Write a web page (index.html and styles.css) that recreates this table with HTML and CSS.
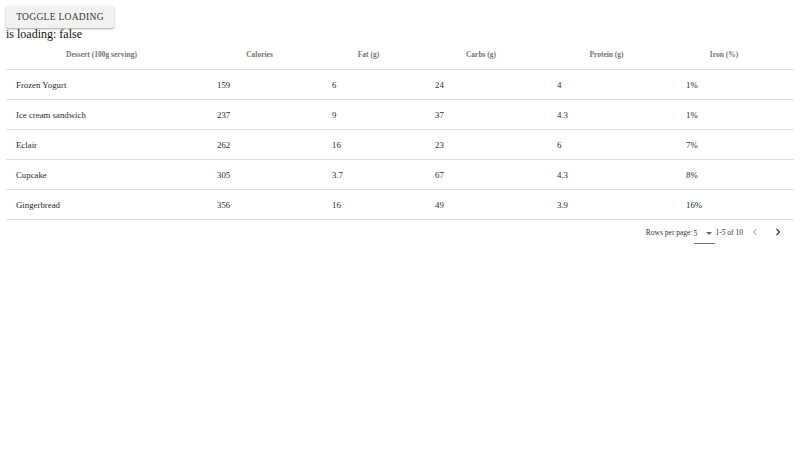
FILE: index.html
```html
<!DOCTYPE html>
<html>
<head>
<meta charset="utf-8">
<link rel="stylesheet" href="styles.css">
</head>
<body>
<div class="page">
  <button class="btn">TOGGLE LOADING</button>
  <div class="status">is loading: false</div>
  <table class="tbl">
    <colgroup>
      <col class="c1"><col class="c2"><col class="c3"><col class="c4"><col class="c5"><col class="c6">
    </colgroup>
    <thead>
      <tr><th>Dessert (100g serving)</th><th>Calories</th><th>Fat (g)</th><th>Carbs (g)</th><th>Protein (g)</th><th class="last">Iron (%)</th></tr>
    </thead>
    <tbody>
      <tr><td>Frozen Yogurt</td><td>159</td><td>6</td><td>24</td><td>4</td><td>1%</td></tr>
      <tr><td>Ice cream sandwich</td><td>237</td><td>9</td><td>37</td><td>4.3</td><td>1%</td></tr>
      <tr><td>Eclair</td><td>262</td><td>16</td><td>23</td><td>6</td><td>7%</td></tr>
      <tr><td>Cupcake</td><td>305</td><td>3.7</td><td>67</td><td>4.3</td><td>8%</td></tr>
      <tr><td>Gingerbread</td><td>356</td><td>16</td><td>49</td><td>3.9</td><td>16%</td></tr>
    </tbody>
  </table>
  <div class="pager">
    <span class="rpp">Rows per page:</span>
    <span class="select"><span class="val">5</span><svg class="caret" width="10" height="10" viewBox="0 0 10 10"><path d="M2 4h6L5 7z" fill="#666"/></svg></span>
    <span class="range">1-5 of 10</span>
    <span class="nav"><svg width="14" height="14" viewBox="0 0 24 24"><path d="M15.41 7.41 14 6l-6 6 6 6 1.41-1.41L10.83 12z" fill="#c4c4c4"/></svg></span>
    <span class="nav"><svg width="14" height="14" viewBox="0 0 24 24"><path d="M10 6 8.59 7.41 13.17 12l-4.58 4.59L10 18l6-6z" fill="#333"/></svg></span>
  </div>
</div>
</body>
</html>
```

FILE: styles.css
```css
html, body { margin: 0; padding: 0; background: #fff; }
body { font-family: "Liberation Serif", serif; color: #222; }
.page { padding: 6px; }
.btn {
  display: block;
  height: 22px;
  width: 108px;
  padding: 0;
  border: none;
  border-radius: 2px;
  background: #f2f2f2;
  font-family: "Liberation Serif", serif;
  font-size: 9.5px;
  letter-spacing: 0.3px;
  color: #333;
  box-shadow: 0 1px 3px rgba(0,0,0,0.25), 0 1px 1px rgba(0,0,0,0.14);
}
.status { font-size: 12px; line-height: 12px; color: #111; }
.tbl { border-collapse: collapse; table-layout: fixed; width: 788px; }
.c1 { width: 201px; }
.c2 { width: 115px; }
.c3 { width: 103px; }
.c4 { width: 122px; }
.c5 { width: 129px; }
.c6 { width: 118px; }
.tbl th {
  height: 29px;
  font-size: 7.5px;
  font-weight: bold;
  color: #757575;
  text-align: center;
  padding: 0 10px 0 0;
  border-bottom: 1px solid #e0e0e0;
}
.tbl th.last { padding-right: 22px; }
.tbl td {
  height: 29px;
  font-size: 8.8px;
  color: #2a2a2a;
  padding: 0 0 0 10px;
  border-bottom: 1px solid #e0e0e0;
}
.pager {
  display: flex;
  align-items: center;
  justify-content: flex-end;
  height: 24px;
  padding-right: 5px;
  font-size: 7.5px;
  color: #333;
}
.rpp { margin-right: 1px; }
.select {
  display: flex;
  align-items: center;
  width: 21px;
  height: 21px;
  margin-top: 3px;
  border-bottom: 1px solid #777;
  box-sizing: border-box;
}
.select .caret { margin-left: 7px; }
.range { margin-left: 1px; margin-right: 0; }
.nav { display: flex; width: 23px; justify-content: center; }
```
